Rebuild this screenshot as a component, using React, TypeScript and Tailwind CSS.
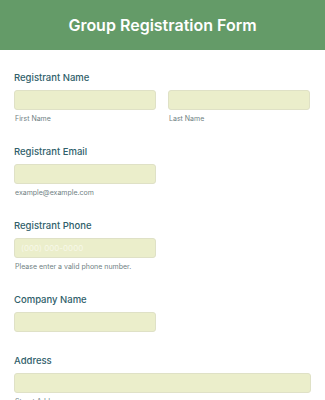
import React from 'react';

const inputClass = "block h-[20px] rounded-[3px] border border-[#dfe1c6] bg-[#ebeecb] px-[6px] text-[8px] text-[#33545c] placeholder:text-[#f7f8e8] focus:outline-none";

const Label: React.FC<{ children: React.ReactNode }> = ({ children }) => (
    <div className="h-[14px] text-[9.5px] font-medium leading-[14px] text-[#30606a]">{children}</div>
);

const Sub: React.FC<{ children: React.ReactNode }> = ({ children }) => (
    <div className="mt-[4px] h-[9px] pl-[1px] text-[7px] leading-[9px] text-[#6f7f84]">{children}</div>
);

export default function App() {
    return (
        <div className="min-h-[400px] w-[325px] overflow-hidden bg-white font-['Inter',sans-serif]">
            <div className="flex h-[50px] items-center justify-center bg-[#649b68]">
                <h1 className="text-[16px] font-semibold text-white">Group Registration Form</h1>
            </div>

            <form className="flex flex-col gap-[22px] px-[14px] pt-[21px]">
                <div>
                    <Label>Registrant Name</Label>
                    <div className="mt-[5px] grid grid-cols-2 gap-[12px] pr-[1px]">
                        <div>
                            <input type="text" className={`${inputClass} w-full`} />
                            <Sub>First Name</Sub>
                        </div>
                        <div>
                            <input type="text" className={`${inputClass} w-full`} />
                            <Sub>Last Name</Sub>
                        </div>
                    </div>
                </div>

                <div>
                    <Label>Registrant Email</Label>
                    <input type="email" className={`${inputClass} mt-[5px] w-[142px]`} />
                    <Sub>example@example.com</Sub>
                </div>

                <div>
                    <Label>Registrant Phone</Label>
                    <input type="tel" placeholder="(000) 000-0000" className={`${inputClass} mt-[5px] w-[142px]`} />
                    <Sub>Please enter a valid phone number.</Sub>
                </div>

                <div>
                    <Label>Company Name</Label>
                    <input type="text" className={`${inputClass} mt-[5px] w-[142px]`} />
                </div>

                <div>
                    <Label>Address</Label>
                    <input type="text" className={`${inputClass} mt-[5px] w-full`} />
                    <Sub>Street Address</Sub>
                </div>
            </form>
        </div>
    );
}
